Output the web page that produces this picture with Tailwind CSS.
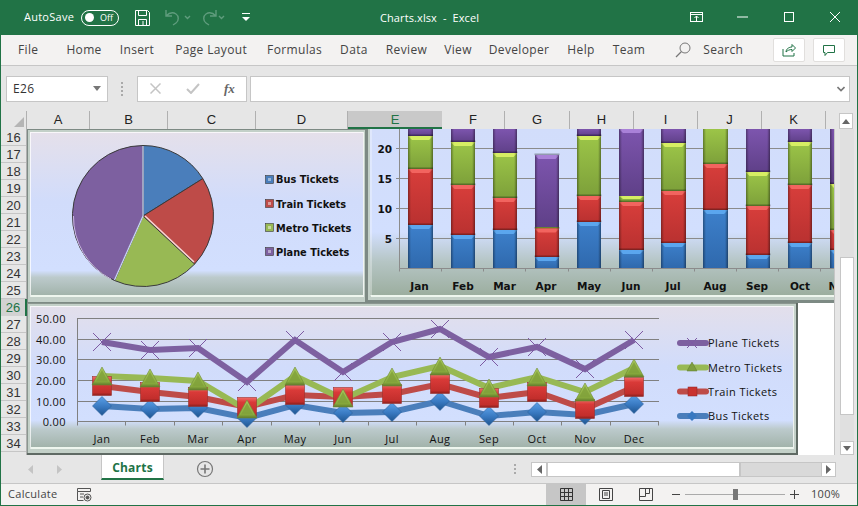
<!DOCTYPE html>
<html><head><meta charset="utf-8"><title>Charts.xlsx - Excel</title>
<script src="https://cdn.jsdelivr.net/npm/@tailwindcss/browser@4"></script></head>
<body class="m-0 overflow-hidden">
<div class="relative flex flex-col w-[858px] h-[506px] overflow-hidden bg-[#e6e6e6] border-x border-b border-[#217346] font-['Open_Sans',sans-serif] text-[12px] text-[#444]">

<!-- title bar -->
<header class="relative flex items-center h-[35px] shrink-0 bg-[#217346] text-white text-[11px]">
  <span class="ml-[23px] tracking-[0.25px]">AutoSave</span>
  <span class="ml-[7px] flex items-center justify-between w-[38px] h-[16px] rounded-full border border-white px-[3px] text-[9px]"><i class="block w-[9px] h-[9px] rounded-full bg-white"></i><span class="mr-[2px]">Off</span></span>
  <svg class="ml-[15px]" width="17" height="18" viewBox="0 0 17 18" fill="none" stroke="#fff"><path d="M1.500 1.500h12l2 2v13h-14z"/><path d="M4.500 1.500v5h8v-5M4.500 16.500v-6h8v6M9 12v4"/></svg>
  <svg class="ml-[13px]" width="28" height="18" viewBox="0 0 28 18" fill="none" stroke="#5f9c7d" stroke-width="1.400"><path d="M2 1v6h6M2 7c3-3 7-4 10-2 3 2 3 7 0 9l-3 2"/><path d="M21 7l2.500 2.500 2.500-2.500"/></svg>
  <svg class="ml-[8px]" width="28" height="18" viewBox="0 0 28 18" fill="none" stroke="#5f9c7d" stroke-width="1.400"><path d="M16 1v6h-6M16 7c-3-3-7-4-10-2-3 2-3 7 0 9l3 2"/><path d="M19 7l2.500 2.500 2.500-2.500"/></svg>
  <svg class="ml-[14px]" width="9" height="9" viewBox="0 0 9 9" fill="#fff"><rect y="0" width="8" height="1"/><path d="M0 4h8l-4 4z"/></svg>
  <span class="absolute left-[379px] top-[10px] tracking-[0.1px]">Charts.xlsx&nbsp; -&nbsp; Excel</span>
  <svg class="absolute left-[688px] top-[11px]" width="15" height="12" viewBox="0 0 15 12" fill="none" stroke="#fff"><rect x="1.500" y="1.500" width="12" height="9"/><path d="M1.500 3.500h12M7.500 10V5M5.500 7l2-2 2 2"/></svg>
  <svg class="absolute left-[736px] top-[16px]" width="12" height="2"><rect width="11" height="1" y="0.500" fill="#fff"/></svg>
  <svg class="absolute left-[782px] top-[11px]" width="12" height="12" fill="none" stroke="#fff"><rect x="1.500" y="1.500" width="9" height="9"/></svg>
  <svg class="absolute left-[828px] top-[11px]" width="12" height="12" fill="none" stroke="#fff"><path d="M1 1l10 10M11 1L1 11"/></svg>
</header>

<!-- ribbon tabs -->
<nav class="relative flex items-center h-[31px] shrink-0 bg-[#f3f2f1] border-b border-[#c6c6c6] tracking-[0.35px]">
  <span class="ml-[17px]">File</span>
  <span class="ml-[28px]">Home</span>
  <span class="ml-[18px]">Insert</span>
  <span class="ml-[21px]">Page Layout</span>
  <span class="ml-[20px]">Formulas</span>
  <span class="ml-[18px]">Data</span>
  <span class="ml-[18px]">Review</span>
  <span class="ml-[17px]">View</span>
  <span class="ml-[17px]">Developer</span>
  <span class="ml-[18px]">Help</span>
  <span class="ml-[18px]">Team</span>
  <svg class="ml-[30px]" width="16" height="16" viewBox="0 0 16 16" fill="none" stroke="#777"><circle cx="10" cy="6" r="5"/><path d="M6.500 9.500L1 15" stroke-width="1.300"/></svg>
  <span class="ml-[12px]">Search</span>
  <span class="absolute left-[772px] top-[3px] flex items-center justify-center w-[32px] h-[24px] rounded-[2px] bg-white border border-[#e1dfdd]"><svg width="14" height="14" viewBox="0 0 14 14" fill="none" stroke="#217346"><path d="M1 6v7h11v-3"/><path d="M4 9c0-3 3-5 6-5V1.500L13.500 5 10 8.500V6.500C7.500 6.500 5.500 7.500 4 9z"/></svg></span>
  <span class="absolute left-[812px] top-[3px] flex items-center justify-center w-[32px] h-[24px] rounded-[2px] bg-white border border-[#e1dfdd]"><svg width="14" height="13" viewBox="0 0 14 13" fill="none" stroke="#217346"><path d="M1.500 1.500h11v7h-7l-2.500 3v-3h-1.500z"/></svg></span>
</nav>

<!-- formula bar -->
<div class="relative flex items-center h-[45px] shrink-0">
  <div class="ml-[5px] flex items-center justify-between w-[102px] h-[26px] bg-white border border-[#c6c6c6] pl-[6px] pr-[6px] text-[#333] tracking-[0.4px]">E26<svg width="8" height="5"><path d="M0 0h8l-4 5z" fill="#777"/></svg></div>
  <div class="ml-[13px] flex flex-col gap-[2px] w-[3px]"><i class="block w-[2px] h-[2px] bg-[#aaa]"></i><i class="block w-[2px] h-[2px] bg-[#aaa]"></i><i class="block w-[2px] h-[2px] bg-[#aaa]"></i><i class="block w-[2px] h-[2px] bg-[#aaa]"></i></div>
  <div class="ml-[13px] relative flex items-center w-[110px] h-[26px] bg-white border border-[#c6c6c6]">
    <svg class="ml-[12px]" width="11" height="11" fill="none" stroke="#c4c4c4" stroke-width="1.500"><path d="M0.500 0.500l10 10M10.500 0.500l-10 10"/></svg>
    <svg class="ml-[25px]" width="14" height="11" fill="none" stroke="#c4c4c4" stroke-width="2"><path d="M1 6l4 4 8-9"/></svg>
    <span class="ml-[24px] font-['Liberation_Serif',serif] italic font-bold text-[13px] text-[#666] leading-none">fx</span>
  </div>
  <div class="ml-[3px] flex items-center justify-end w-[600px] h-[26px] bg-white border border-[#c6c6c6] pr-[4px]"><svg width="8" height="6" fill="none" stroke="#777" stroke-width="1.600"><path d="M0.500 1l3.500 3.500L7.500 1"/></svg></div>
</div>

<!-- column headers -->
<div class="flex h-[18px] shrink-0 font-['Liberation_Sans',sans-serif] text-[13px] text-[#222] leading-[17px] text-center">
  <div class="relative w-[26px] shrink-0 border-r border-[#b0b0b0]"><svg class="absolute right-[2px] bottom-[2px]" width="10" height="10"><path d="M10 0v10H0z" fill="#b5b5b5"/></svg></div>
  <div class="w-[63px] border-r border-[#b0b0b0]">A</div>
  <div class="w-[78px] border-r border-[#b0b0b0]">B</div>
  <div class="w-[88px] border-r border-[#b0b0b0]">C</div>
  <div class="w-[92px] border-r border-[#b0b0b0]">D</div>
  <div class="w-[94px] bg-[#c9c9c9] text-[#217346] border-b-2 border-[#217346]">E</div>
  <div class="w-[63px] border-r border-[#b0b0b0]">F</div>
  <div class="w-[65px] border-r border-[#b0b0b0]">G</div>
  <div class="w-[64px] border-r border-[#b0b0b0]">H</div>
  <div class="w-[64px] border-r border-[#b0b0b0]">I</div>
  <div class="w-[64px] border-r border-[#b0b0b0]">J</div>
  <div class="w-[64px] border-r border-[#b0b0b0]">K</div>
  <div class="w-[13px]"></div>
  <div class="flex items-center justify-center w-[14px] h-[16px] mt-[2px] bg-white border border-[#c6c6c6]"><svg width="8" height="5"><path d="M4 0l4 5H0z" fill="#666"/></svg></div>
</div>

<!-- sheet -->
<div class="flex h-[326px] shrink-0">
  <div class="flex flex-col w-[26px] shrink-0 font-['Liberation_Sans',sans-serif] text-[13px] text-[#333] text-center leading-[17px] border-r border-[#b0b0b0]">
    <div class="h-[17px] border-b border-[#c6c6c6]">16</div><div class="h-[17px] border-b border-[#c6c6c6]">17</div><div class="h-[17px] border-b border-[#c6c6c6]">18</div><div class="h-[17px] border-b border-[#c6c6c6]">19</div><div class="h-[17px] border-b border-[#c6c6c6]">20</div><div class="h-[17px] border-b border-[#c6c6c6]">21</div><div class="h-[17px] border-b border-[#c6c6c6]">22</div><div class="h-[17px] border-b border-[#c6c6c6]">23</div><div class="h-[17px] border-b border-[#c6c6c6]">24</div><div class="h-[17px] border-b border-[#c6c6c6]">25</div>
    <div class="h-[17px] -mr-[1px] bg-[#d2d2d2] text-[#217346] border-r-2 border-[#217346]">26</div>
    <div class="h-[17px] border-b border-[#c6c6c6]">27</div><div class="h-[17px] border-b border-[#c6c6c6]">28</div><div class="h-[17px] border-b border-[#c6c6c6]">29</div><div class="h-[17px] border-b border-[#c6c6c6]">30</div><div class="h-[17px] border-b border-[#c6c6c6]">31</div><div class="h-[17px] border-b border-[#c6c6c6]">32</div><div class="h-[17px] border-b border-[#c6c6c6]">33</div><div class="h-[17px] border-b border-[#c6c6c6]">34</div>
  </div>

  <div class="relative w-[808px] bg-white border-r border-[#c6c6c6] overflow-hidden">
    <!-- shared defs + pie chart -->
    <svg class="absolute left-0 top-0" width="340" height="175" viewBox="27 129 340 175">
      <defs>
        <linearGradient id="bg1" x1="0" y1="0" x2="0" y2="1"><stop offset="0" stop-color="#e5e0ea"/><stop offset=".42" stop-color="#d1dcfb"/><stop offset=".84" stop-color="#d2dffe"/><stop offset=".88" stop-color="#bccacc"/><stop offset="1" stop-color="#9fb1a7"/></linearGradient>
        <linearGradient id="bg2" x1="0" y1="0" x2="0" y2="1"><stop offset="0" stop-color="#d2ddfb"/><stop offset=".62" stop-color="#d2dffe"/><stop offset=".8" stop-color="#b5c5c4"/><stop offset="1" stop-color="#9cae9f"/></linearGradient>
        <linearGradient id="bg3" x1="0" y1="0" x2="0" y2="1"><stop offset="0" stop-color="#e3dfeb"/><stop offset=".42" stop-color="#d1dcfb"/><stop offset=".8" stop-color="#d2dffe"/><stop offset=".86" stop-color="#bccacc"/><stop offset="1" stop-color="#9fb1a7"/></linearGradient>
        <linearGradient id="gb" x1="0" x2="0" y1="0" y2="1"><stop offset="0" stop-color="#3d80cb"/><stop offset="1" stop-color="#2f69ad"/></linearGradient>
        <linearGradient id="gr" x1="0" x2="0" y1="0" y2="1"><stop offset="0" stop-color="#d83e3b"/><stop offset="1" stop-color="#b93130"/></linearGradient>
        <linearGradient id="gg" x1="0" x2="0" y1="0" y2="1"><stop offset="0" stop-color="#9cc548"/><stop offset="1" stop-color="#7da03a"/></linearGradient>
        <linearGradient id="gp" x1="0" x2="0" y1="0" y2="1"><stop offset="0" stop-color="#7d55ae"/><stop offset="1" stop-color="#5f4088"/></linearGradient>
        <linearGradient id="edge" x1="0" x2="1" y1="0" y2="0"><stop offset="0" stop-color="#000" stop-opacity=".35"/><stop offset=".12" stop-color="#000" stop-opacity="0"/><stop offset=".88" stop-color="#000" stop-opacity="0"/><stop offset="1" stop-color="#000" stop-opacity=".4"/></linearGradient>
        <linearGradient id="mr" x1="0" y1="0" x2="0" y2="1"><stop offset="0" stop-color="#f26a66"/><stop offset=".25" stop-color="#d93a38"/><stop offset=".85" stop-color="#c22e2c"/><stop offset="1" stop-color="#8b1f1d"/></linearGradient>
        <linearGradient id="mg" x1="0" y1="0" x2="0" y2="1"><stop offset="0" stop-color="#a9c95f"/><stop offset=".8" stop-color="#8aad3f"/><stop offset="1" stop-color="#5f7a2b"/></linearGradient>
        <linearGradient id="mb" x1="0" y1="0" x2="0" y2="1"><stop offset="0" stop-color="#5aa0e8"/><stop offset=".55" stop-color="#3878c0"/><stop offset="1" stop-color="#1e5590"/></linearGradient>
        <g id="tb"><rect x="0" y="-1.500" width="25" height="1.500" fill="#000" fill-opacity=".3"/><path d="M0 0h25l-4 4H4z" fill="#5ba6ee"/></g>
        <g id="tr"><rect x="0" y="-1.500" width="25" height="1.500" fill="#000" fill-opacity=".3"/><path d="M0 0h25l-4 4H4z" fill="#f2645f"/></g>
        <g id="tg"><rect x="0" y="-1.500" width="25" height="1.500" fill="#000" fill-opacity=".3"/><path d="M0 0h25l-4 4H4z" fill="#d6ee63"/></g>
        <g id="tp"><rect x="0" y="-1.500" width="25" height="1.500" fill="#000" fill-opacity=".3"/><path d="M0 0h25l-4 4H4z" fill="#a981d8"/></g>
        <g id="mX" stroke="#7d5aa3" fill="none"><path d="M-9-9L9 9M9-9L-9 9"/></g>
        <g id="mT"><path d="M0-10L10 8H-10z" fill="url(#mg)" stroke="#6f8c36" stroke-width=".6"/><path d="M0-7L6 4.500H-6z" fill="#7fa03a" fill-opacity=".8"/></g>
        <g id="mS"><rect x="-9.500" y="-9.500" width="19" height="19" fill="url(#mr)" stroke="#9a3230" stroke-width=".6"/></g>
        <g id="mD"><path d="M0-9.500L9.500 0 0 9.500-9.500 0z" fill="url(#mb)" stroke="#2b5f9a" stroke-width=".6"/></g>
      </defs>
      <rect x="27" y="129" width="340" height="175" fill="#7d8a84"/>
      <rect x="28" y="130" width="337" height="172" fill="#c3d0c8"/>
      <rect x="30" y="132" width="333" height="165" fill="url(#bg1)"/>
      <rect x="30.500" y="132.500" width="333" height="164" fill="none" stroke="#fff" stroke-opacity=".75"/>
      <path d="M31 296h332" stroke="#eef6ee" stroke-width="2"/>
      <g stroke="#3a3a3a" stroke-width="1">
        <path d="M143 216V145.500A70.500 70.500 0 0 1 202.800 178.600z" fill="#4a7ebb"/>
        <path d="M143 216L202.800 178.600A70.500 70.500 0 0 1 194.600 264.100z" fill="#be4b48"/>
        <path d="M143 216L194.600 264.100A70.500 70.500 0 0 1 114.500 280.500z" fill="#98b954"/>
        <path d="M143 216L114.500 280.500A70.500 70.500 0 0 1 143 145.500z" fill="#7d60a0"/>
      </g>
      <path d="M143 146V216L114.500 280" fill="none" stroke="#c9d4f5" stroke-width="1.300"/>
      <path d="M145 216L194 262" fill="none" stroke="#f9d8d6" stroke-width="1.500"/>
      <path d="M73.500 216A70 70 0 0 0 111 279" fill="none" stroke="#cdb9e6" stroke-width="1"/>
      <g stroke="#3a3a3a" stroke-width=".6">
        <rect x="265.500" y="175.500" width="8" height="8" fill="#4a7ebb"/><rect x="265.500" y="199.500" width="8" height="8" fill="#be4b48"/><rect x="265.500" y="223.500" width="8" height="8" fill="#98b954"/><rect x="265.500" y="247.500" width="8" height="8" fill="#7d60a0"/>
      </g>
      <g fill="#fff" fill-opacity=".45"><rect x="268" y="178" width="3" height="3"/><rect x="268" y="202" width="3" height="3"/><rect x="268" y="226" width="3" height="3"/><rect x="268" y="250" width="3" height="3"/></g>
      <g font-family="'DejaVu Sans',sans-serif" font-weight="700" font-size="9.800" fill="#111">
        <text x="276" y="183">Bus Tickets</text><text x="276" y="207.500">Train Tickets</text><text x="276" y="232">Metro Tickets</text><text x="276" y="256">Plane Tickets</text>
      </g>
    </svg>

    <!-- stacked bars chart -->
    <svg class="absolute left-[340px] top-0" width="468" height="174" viewBox="367 129 468 174">
      <rect x="367" y="129" width="468" height="174" fill="#7d8a84"/>
      <rect x="368" y="129" width="467" height="171" fill="#c3d0c8"/>
      <rect x="370" y="129" width="465" height="166" fill="url(#bg2)"/>
      <path d="M371 296h464" stroke="#eef6ee" stroke-width="2"/>
      <path d="M371 129v167" stroke="#fff" stroke-opacity=".6"/>
      <g stroke="#8b8b8b" fill="none"><path d="M399.500 148.500H835M399.500 178.500H835M399.500 208.500H835M399.500 238.500H835"/><path d="M399.500 129V268.500H835M399.500 268.500v3M441.500 268.500v3M483.500 268.500v3M525.500 268.500v3M568.500 268.500v3M610.500 268.500v3M652.500 268.500v3M694.500 268.500v3M736.500 268.500v3M778.500 268.500v3M820.500 268.500v3"/><path d="M399 148.500h-3M399 178.500h-3M399 208.500h-3M399 238.500h-3"/></g>
      <g>
        <rect x="408" y="129" width="25" height="7" fill="url(#gp)"/><rect x="408" y="136" width="25" height="33" fill="url(#gg)"/><use href="#tg" x="408" y="136"/><rect x="408" y="169" width="25" height="56" fill="url(#gr)"/><use href="#tr" x="408" y="169"/><rect x="408" y="225" width="25" height="43" fill="url(#gb)"/><use href="#tb" x="408" y="225"/>
        <rect x="451" y="129" width="24" height="13" fill="url(#gp)"/><rect x="451" y="142" width="24" height="43" fill="url(#gg)"/><use href="#tg" x="450.500" y="142"/><rect x="451" y="185" width="24" height="50" fill="url(#gr)"/><use href="#tr" x="450.500" y="185"/><rect x="451" y="235" width="24" height="33" fill="url(#gb)"/><use href="#tb" x="450.500" y="235"/>
        <rect x="493" y="129" width="24" height="24" fill="url(#gp)"/><rect x="493" y="153" width="24" height="45" fill="url(#gg)"/><use href="#tg" x="492.500" y="153"/><rect x="493" y="198" width="24" height="32" fill="url(#gr)"/><use href="#tr" x="492.500" y="198"/><rect x="493" y="230" width="24" height="38" fill="url(#gb)"/><use href="#tb" x="492.500" y="230"/>
        <rect x="535" y="155" width="24" height="72" fill="url(#gp)"/><use href="#tp" x="534.500" y="155"/><rect x="535" y="227" width="24" height="2" fill="url(#gg)"/><rect x="535" y="228.500" width="24" height="28.500" fill="url(#gr)"/><use href="#tr" x="534.500" y="228.500"/><rect x="535" y="257" width="24" height="11" fill="url(#gb)"/><use href="#tb" x="534.500" y="257"/>
        <rect x="577" y="129" width="24" height="7" fill="url(#gp)"/><rect x="577" y="136" width="24" height="60" fill="url(#gg)"/><use href="#tg" x="576.500" y="136"/><rect x="577" y="196" width="24" height="26" fill="url(#gr)"/><use href="#tr" x="576.500" y="196"/><rect x="577" y="222" width="24" height="46" fill="url(#gb)"/><use href="#tb" x="576.500" y="222"/>
        <rect x="619" y="129" width="25" height="67" fill="url(#gp)"/><use href="#tp" x="619" y="129"/><rect x="619" y="196" width="25" height="6" fill="url(#gg)"/><path d="M619 196h25l-4 3h-17z" fill="#d6ee63"/><rect x="619" y="202" width="25" height="48" fill="url(#gr)"/><use href="#tr" x="619" y="202"/><rect x="619" y="250" width="25" height="18" fill="url(#gb)"/><use href="#tb" x="619" y="250"/>
        <rect x="661" y="129" width="25" height="14" fill="url(#gp)"/><rect x="661" y="143" width="25" height="48" fill="url(#gg)"/><use href="#tg" x="661" y="143"/><rect x="661" y="191" width="25" height="52" fill="url(#gr)"/><use href="#tr" x="661" y="191"/><rect x="661" y="243" width="25" height="25" fill="url(#gb)"/><use href="#tb" x="661" y="243"/>
        <rect x="703" y="129" width="25" height="35" fill="url(#gg)"/><rect x="703" y="164" width="25" height="46" fill="url(#gr)"/><use href="#tr" x="703" y="164"/><rect x="703" y="210" width="25" height="58" fill="url(#gb)"/><use href="#tb" x="703" y="210"/>
        <rect x="746" y="129" width="24" height="43" fill="url(#gp)"/><rect x="746" y="172" width="24" height="34" fill="url(#gg)"/><use href="#tg" x="745.500" y="172"/><rect x="746" y="206" width="24" height="49" fill="url(#gr)"/><use href="#tr" x="745.500" y="206"/><rect x="746" y="255" width="24" height="13" fill="url(#gb)"/><use href="#tb" x="745.500" y="255"/>
        <rect x="788" y="129" width="24" height="13" fill="url(#gp)"/><rect x="788" y="142" width="24" height="43" fill="url(#gg)"/><use href="#tg" x="787.500" y="142"/><rect x="788" y="185" width="24" height="58" fill="url(#gr)"/><use href="#tr" x="787.500" y="185"/><rect x="788" y="243" width="24" height="25" fill="url(#gb)"/><use href="#tb" x="787.500" y="243"/>
        <rect x="830" y="129" width="25" height="55" fill="url(#gp)"/><rect x="830" y="184" width="25" height="46" fill="url(#gg)"/><use href="#tg" x="830" y="184"/><rect x="830" y="230" width="25" height="20" fill="url(#gr)"/><use href="#tr" x="830" y="230"/><rect x="830" y="250" width="25" height="18" fill="url(#gb)"/><use href="#tb" x="830" y="250"/>
      </g>
      <g fill="url(#edge)"><rect x="408" y="129" width="25" height="139"/><rect x="451" y="129" width="24" height="139"/><rect x="493" y="129" width="24" height="139"/><rect x="535" y="155" width="24" height="113"/><rect x="577" y="129" width="24" height="139"/><rect x="619" y="129" width="25" height="139"/><rect x="661" y="129" width="25" height="139"/><rect x="703" y="129" width="25" height="139"/><rect x="746" y="129" width="24" height="139"/><rect x="788" y="129" width="24" height="139"/><rect x="830" y="129" width="25" height="139"/></g>
      <g font-family="'DejaVu Sans',sans-serif" font-weight="700" font-size="10.500" fill="#111">
        <text x="392" y="153" text-anchor="end">20</text><text x="392" y="183" text-anchor="end">15</text><text x="392" y="213" text-anchor="end">10</text><text x="392" y="243" text-anchor="end">5</text>
        <g text-anchor="middle"><text x="419.500" y="290">Jan</text><text x="463" y="290">Feb</text><text x="504.500" y="290">Mar</text><text x="546" y="290">Apr</text><text x="589" y="290">May</text><text x="631" y="290">Jun</text><text x="673" y="290">Jul</text><text x="715" y="290">Aug</text><text x="757" y="290">Sep</text><text x="800" y="290">Oct</text><text x="840" y="290">Nov</text></g>
      </g>
    </svg>

    <!-- line chart -->
    <svg class="absolute left-0 top-[174px]" width="771" height="152" viewBox="27 303 771 152">
      <rect x="27" y="303" width="771" height="152" fill="#5f6a64"/>
      <rect x="27" y="303" width="769" height="150" fill="#8a968f"/>
      <rect x="28" y="304" width="768" height="149" fill="#c3d0c8"/>
      <rect x="30" y="306" width="763" height="143" fill="url(#bg3)"/>
      <rect x="30.500" y="306.500" width="763" height="142" fill="none" stroke="#fff" stroke-opacity=".7"/>
      <path d="M31 448h762" stroke="#eef6ee" stroke-width="2"/>
      <g stroke="#808080" fill="none"><path d="M77.500 318.500H659M77.500 339.500H659M77.500 359.500H659M77.500 380.500H659M77.500 401.500H659"/><path d="M77.500 318V421.500H659M77.500 421.500v4M125.500 421.500v4M174.500 421.500v4M222.500 421.500v4M271.500 421.500v4M319.500 421.500v4M368.500 421.500v4M416.500 421.500v4M465.500 421.500v4M513.500 421.500v4M561.500 421.500v4M610.500 421.500v4M658.500 421.500v4"/></g>
      <g fill="none" stroke-width="6" stroke-linejoin="miter">
        <polyline stroke="#4a7ebb" points="102,406 150,409 198,408 247,418 295,405 343,413 392,412 440,401 489,416 537,412 585,415 634,404"/>
        <polyline stroke="#be4b48" points="102,386 150,392 198,397 247,407 295,395 343,397 392,394 440,384 489,398 537,392 585,409 634,387"/>
        <polyline stroke="#98b954" points="102,376 150,378 198,381 247,410 295,376 343,399 392,377 440,366 489,388 537,377 585,392 634,368"/>
        <polyline stroke="#7d60a0" points="102,342 150,350 198,348 247,382 295,340 343,372 392,342 440,329 489,357 537,347 585,369 634,340"/>
      </g>
      <g><use href="#mX" x="102" y="342"/><use href="#mX" x="150" y="350"/><use href="#mX" x="198" y="348"/><use href="#mX" x="247" y="382"/><use href="#mX" x="295" y="340"/><use href="#mX" x="343" y="372"/><use href="#mX" x="392" y="342"/><use href="#mX" x="440" y="329"/><use href="#mX" x="489" y="357"/><use href="#mX" x="537" y="347"/><use href="#mX" x="585" y="369"/><use href="#mX" x="634" y="340"/></g>
      <g><use href="#mD" x="102" y="406"/><use href="#mD" x="150" y="409"/><use href="#mD" x="198" y="408"/><use href="#mD" x="247" y="418"/><use href="#mD" x="295" y="405"/><use href="#mD" x="343" y="413"/><use href="#mD" x="392" y="412"/><use href="#mD" x="440" y="401"/><use href="#mD" x="489" y="416"/><use href="#mD" x="537" y="412"/><use href="#mD" x="585" y="415"/><use href="#mD" x="634" y="404"/></g>
      <g><use href="#mS" x="102" y="386"/><use href="#mS" x="150" y="392"/><use href="#mS" x="198" y="397"/><use href="#mS" x="247" y="407"/><use href="#mS" x="295" y="395"/><use href="#mS" x="343" y="397"/><use href="#mS" x="392" y="394"/><use href="#mS" x="440" y="384"/><use href="#mS" x="489" y="398"/><use href="#mS" x="537" y="392"/><use href="#mS" x="585" y="409"/><use href="#mS" x="634" y="387"/></g>
      <g><use href="#mT" x="102" y="377"/><use href="#mT" x="150" y="379"/><use href="#mT" x="198" y="382"/><use href="#mT" x="247" y="410"/><use href="#mT" x="295" y="377"/><use href="#mT" x="343" y="399"/><use href="#mT" x="392" y="378"/><use href="#mT" x="440" y="367"/><use href="#mT" x="489" y="389"/><use href="#mT" x="537" y="378"/><use href="#mT" x="585" y="393"/><use href="#mT" x="634" y="369"/></g>
      <g font-family="'Open Sans',sans-serif" font-size="11" fill="#111" letter-spacing=".4">
        <g text-anchor="end"><text x="66" y="323">50.00</text><text x="66" y="343.500">40.00</text><text x="66" y="364">30.00</text><text x="66" y="385">20.00</text><text x="66" y="406">10.00</text><text x="66" y="426">0.00</text></g>
        <g text-anchor="middle"><text x="102" y="443">Jan</text><text x="150" y="443">Feb</text><text x="198" y="443">Mar</text><text x="247" y="443">Apr</text><text x="295" y="443">May</text><text x="343" y="443">Jun</text><text x="392" y="443">Jul</text><text x="440" y="443">Aug</text><text x="489" y="443">Sep</text><text x="537" y="443">Oct</text><text x="585" y="443">Nov</text><text x="634" y="443">Dec</text></g>
        <text x="708" y="347">Plane Tickets</text><text x="708" y="372">Metro Tickets</text><text x="708" y="396">Train Tickets</text><text x="708" y="420">Bus Tickets</text>
      </g>
      <g stroke-width="6" stroke-linecap="round"><path d="M680 343h26" stroke="#7d60a0"/><path d="M680 367.500h26" stroke="#98b954"/><path d="M680 391.500h26" stroke="#be4b48"/><path d="M680 416h26" stroke="#4a7ebb"/></g>
      <path d="M687 338l10 10M697 338l-10 10" stroke="#7d5aa3"/>
      <path d="M692 362l5 9h-10z" fill="#7e9e40" stroke="#5f7a2b" stroke-width=".5"/>
      <rect x="688" y="387" width="9" height="9" fill="#c9322f" stroke="#8b2725" stroke-width=".5"/>
      <path d="M692 411l5 5-5 5-5-5z" fill="#3878c0"/>
    </svg>
  </div>

  <div class="flex flex-col items-end w-[22px] pr-[3px]">
    <div class="w-[14px] h-[128px] bg-[#e0e0e0]"></div>
    <div class="w-[14px] h-[158px] bg-white border border-[#c6c6c6]"></div>
    <div class="w-[14px] h-[26px] bg-[#e0e0e0]"></div>
    <div class="flex items-center justify-center w-[14px] h-[14px] bg-white border border-[#c6c6c6]"><svg width="8" height="5"><path d="M0 0h8l-4 5z" fill="#666"/></svg></div>
  </div>
</div>

<!-- sheet tabs -->
<div class="relative flex items-start h-[29px] shrink-0 border-b border-[#c6c6c6]">
  <svg class="absolute left-[27px] top-[10px]" width="5" height="9"><path d="M5 0v9L0 4.500z" fill="#c4c4c4"/></svg>
  <svg class="absolute left-[56px] top-[10px]" width="5" height="9"><path d="M0 0v9l5-4.500z" fill="#c4c4c4"/></svg>
  <div class="ml-[100px] flex items-center justify-center w-[63px] h-[25px] pt-[2px] bg-white border-x border-[#c6c6c6] border-b-2 border-b-[#217346] font-bold text-[#217346] text-[12px] tracking-[0.2px]">Charts</div>
  <svg class="ml-[32px] mt-[5px]" width="18" height="18" fill="none" stroke="#777"><circle cx="9" cy="9" r="7.500" stroke-width="1.200"/><path d="M9 4.500v9M4.500 9h9" stroke-width="1.600"/></svg>
  <div class="absolute left-[513px] top-[9px] flex flex-col gap-[2px]"><i class="block w-[2px] h-[2px] bg-[#aaa]"></i><i class="block w-[2px] h-[2px] bg-[#aaa]"></i><i class="block w-[2px] h-[2px] bg-[#aaa]"></i></div>
  <div class="absolute left-[530px] top-[7px] flex w-[305px] h-[15px] border border-[#c6c6c6] bg-[#d9d9d9]">
    <div class="flex items-center justify-center w-[14px] bg-white"><svg width="5" height="9"><path d="M5 0v9L0 4.500z" fill="#666"/></svg></div>
    <div class="w-[195px] bg-white border-x-2 border-[#c6c6c6]"></div>
    <div class="ml-auto flex items-center justify-center w-[14px] bg-white border-l border-[#c6c6c6]"><svg width="5" height="9"><path d="M0 0v9l5-4.500z" fill="#666"/></svg></div>
  </div>
</div>

<!-- status bar -->
<footer class="relative flex items-center flex-1 bg-[#f3f2f1] text-[11px] tracking-[0.3px]">
  <span class="ml-[7px]">Calculate</span>
  <svg class="ml-[19px]" width="15" height="14" fill="none" stroke="#555"><path d="M0.500 0.500h13v3h-13zM0.500 3.500v9h6M3 6h4M3 9h3"/><circle cx="10.500" cy="9.500" r="3.500"/><circle cx="10.500" cy="9.500" r="1.500" fill="#555"/></svg>
  <div class="absolute left-[545px] top-0 flex items-center justify-center w-[40px] h-full bg-[#c6c6c6]"><svg width="13" height="13" fill="none" stroke="#333"><path d="M0.500 0.500h12v12h-12zM4.500 0.500v12M8.500 0.500v12M0.500 4.500h12M0.500 8.500h12"/></svg></div>
  <svg class="absolute left-[598px] top-[4px]" width="14" height="13" fill="none" stroke="#444"><path d="M0.500 0.500h13v12h-13zM3.500 2.500h7v8h-7zM5 5h4M5 7h4"/></svg>
  <svg class="absolute left-[638px] top-[4px]" width="14" height="13" fill="none" stroke="#444"><path d="M0.500 0.500h13v12h-13zM0.500 8.500h6v-8M6.500 5.500h4v-5"/></svg>
  <i class="absolute left-[671px] top-[10px] block w-[8px] h-[1px] bg-[#444]"></i>
  <i class="absolute left-[684px] top-[10px] block w-[100px] h-[1px] bg-[#aaa]"></i>
  <i class="absolute left-[732px] top-[5px] block w-[5px] h-[11px] bg-[#777]"></i>
  <svg class="absolute left-[789px] top-[6px]" width="9" height="9" stroke="#444"><path d="M4.500 0v9M0 4.500h9"/></svg>
  <span class="absolute left-[810px] top-[2px]">100%</span>
</footer>
</div>
</body></html>
